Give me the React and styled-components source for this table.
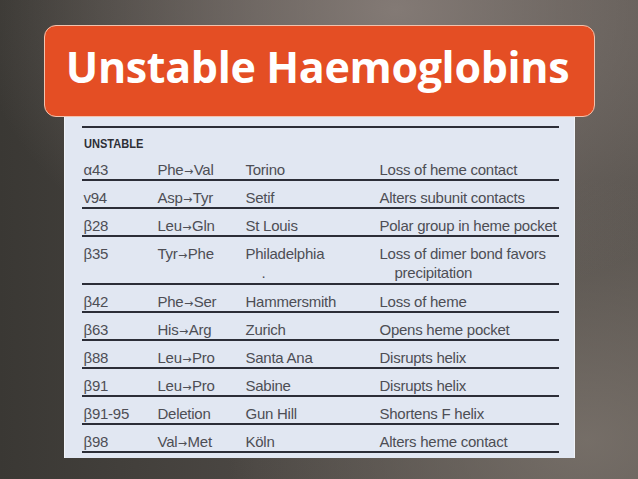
import React from "react";
import styled, { createGlobalStyle } from "styled-components";

const GlobalStyle = createGlobalStyle`
  html, body {
    margin: 0;
    padding: 0;
  }
  body {
    width: 638px;
    height: 479px;
    overflow: hidden;
  }
`;

const Slide = styled.div`
  width: 638px;
  height: 479px;
  box-sizing: border-box;
  padding-top: 25px;
  display: flex;
  flex-direction: column;
  align-items: center;
  background:
    radial-gradient(ellipse 420px 300px at 62% 2%, rgba(140, 130, 125, 0.85), rgba(140, 130, 125, 0) 100%),
    radial-gradient(ellipse 360px 260px at 92% 92%, rgba(125, 117, 110, 0.8), rgba(125, 117, 110, 0) 100%),
    linear-gradient(90deg, #3a3834 0%, #4b4743 40%, #57524d 100%);
`;

const TitleBox = styled.div`
  width: 551px;
  height: 92px;
  box-sizing: border-box;
  border: 1px solid #f3c2ad;
  border-radius: 12px;
  background: #e44e24;
  display: flex;
  align-items: center;
  justify-content: center;
  padding: 0 3px 10px 0;
  position: relative;
  z-index: 1;
`;

const Title = styled.h1`
  margin: 0;
  color: #ffffff;
  font-family: "Open Sans", Lato, sans-serif;
  font-weight: 700;
  font-size: 43px;
  letter-spacing: -0.35px;
`;

const Panel = styled.div`
  width: 511px;
  box-sizing: border-box;
  padding: 9px 15px 5px 17px;
  background: #e1e7f2;
  border-left: 1px solid #f0f3f8;
  border-right: 1px solid #f0f3f8;
  font-family: "Liberation Sans", Arial, sans-serif;
  color: #4d4e55;
`;

const Header = styled.div`
  height: 27px;
  box-sizing: border-box;
  border-top: 2px solid #2c2e38;
  padding: 6px 0 0 2px;
`;

const HeaderLabel = styled.span`
  display: inline-block;
  transform: scaleX(0.85);
  transform-origin: left center;
  font-weight: 700;
  font-size: 13px;
  color: #2e2f36;
`;

const Row = styled.div`
  display: grid;
  grid-template-columns: 74px 88px 134px 1fr;
  height: ${(p) => (p.$tall ? 48 : 28)}px;
  box-sizing: border-box;
  padding: 7px 0 0 2px;
  border-bottom: 2px solid #2c2e38;
  font-size: 15px;
  letter-spacing: -0.25px;
  line-height: 19px;
`;

const Cell = styled.div`
  white-space: nowrap;
`;

const Arrow = styled.span`
  font-family: "DejaVu Sans", sans-serif;
  font-size: 11px;
  letter-spacing: 0;
  margin: 0 0.5px;
`;

const Continued = styled.div`
  padding-left: ${(p) => p.$indent}px;
  line-height: 20px;
`;

const rows = [
  ["α43", "Phe", "Val", "Torino", "Loss of heme contact"],
  ["v94", "Asp", "Tyr", "Setif", "Alters subunit contacts"],
  ["β28", "Leu", "Gln", "St Louis", "Polar group in heme pocket"],
  ["β35", "Tyr", "Phe", "Philadelphia", "Loss of dimer bond favors", "precipitation"],
  ["β42", "Phe", "Ser", "Hammersmith", "Loss of heme"],
  ["β63", "His", "Arg", "Zurich", "Opens heme pocket"],
  ["β88", "Leu", "Pro", "Santa Ana", "Disrupts helix"],
  ["β91", "Leu", "Pro", "Sabine", "Disrupts helix"],
  ["β91-95", "Deletion", null, "Gun Hill", "Shortens F helix"],
  ["β98", "Val", "Met", "Köln", "Alters heme contact"],
];

export default function App() {
  return (
    <>
      <GlobalStyle />
      <Slide>
        <TitleBox>
          <Title>Unstable Haemoglobins</Title>
        </TitleBox>
        <Panel>
          <Header>
            <HeaderLabel>UNSTABLE</HeaderLabel>
          </Header>
          {rows.map(([pos, from, to, name, effect, more]) => (
            <Row key={pos + name} $tall={!!more}>
              <Cell>{pos}</Cell>
              <Cell>
                {from}
                {to && (
                  <>
                    <Arrow>→</Arrow>
                    {to}
                  </>
                )}
              </Cell>
              <Cell>
                {name}
                {more && <Continued $indent={16}>.</Continued>}
              </Cell>
              <Cell>
                {effect}
                {more && <Continued $indent={15}>{more}</Continued>}
              </Cell>
            </Row>
          ))}
        </Panel>
      </Slide>
    </>
  );
}
